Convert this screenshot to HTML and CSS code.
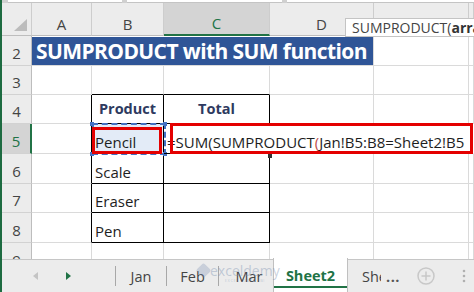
FILE: index.html
```html
<!DOCTYPE html>
<html lang="en">
<head>
<meta charset="utf-8">
<title>SUMPRODUCT with SUM function</title>
<link rel="stylesheet" href="styles.css">
</head>
<body>
<div class="app">
  <div class="edge"></div>
  <div class="main">
    <div class="fbar">
      <div class="fbox fb1"></div>
      <div class="fgap"></div>
      <div class="fbox fb2"></div>
      <div class="fgap"></div>
      <div class="fbox fb3"></div>
    </div>
    <div class="sheet">
      <!-- column headers -->
      <div class="c ch corner"><span class="tri"></span></div>
      <div class="c ch">A</div>
      <div class="c ch">B</div>
      <div class="c ch on">C</div>
      <div class="c ch">D</div>
      <div class="c ch">E</div>
      <div class="c ch"></div>
      <!-- row 2 -->
      <div class="c rh">2</div>
      <div class="c title">SUMPRODUCT with SUM function</div>
      <div class="c"></div>
      <div class="c"></div>
      <!-- row 3 -->
      <div class="c rh">3</div>
      <div class="c"></div>
      <div class="c bb"></div>
      <div class="c bb"></div>
      <div class="c"></div>
      <div class="c"></div>
      <div class="c"></div>
      <!-- row 4 -->
      <div class="c rh">4</div>
      <div class="c br"></div>
      <div class="c tb hd">Product</div>
      <div class="c tb hd">Total</div>
      <div class="c"></div>
      <div class="c"></div>
      <div class="c"></div>
      <!-- row 5 -->
      <div class="c rh on">5</div>
      <div class="c br"></div>
      <div class="c tb sel">Pencil</div>
      <div class="c tb open formula">=SUM(SUMPRODUCT<span class="paren">(</span>Jan!B5:B8=Sheet2!B5</div>
      <div class="c open"></div>
      <div class="c open"></div>
      <div class="c open"></div>
      <!-- row 6 -->
      <div class="c rh">6</div>
      <div class="c br"></div>
      <div class="c tb">Scale</div>
      <div class="c tb"></div>
      <div class="c"></div>
      <div class="c"></div>
      <div class="c"></div>
      <!-- row 7 -->
      <div class="c rh">7</div>
      <div class="c br"></div>
      <div class="c tb">Eraser</div>
      <div class="c tb"></div>
      <div class="c"></div>
      <div class="c"></div>
      <div class="c"></div>
      <!-- row 8 -->
      <div class="c rh">8</div>
      <div class="c br"></div>
      <div class="c tb">Pen</div>
      <div class="c tb"></div>
      <div class="c"></div>
      <div class="c"></div>
      <div class="c"></div>
      <!-- row 9 -->
      <div class="c rh">9</div>
      <div class="c"></div>
      <div class="c"></div>
      <div class="c"></div>
      <div class="c"></div>
      <div class="c"></div>
      <div class="c"></div>
    </div>
    <div class="tabs">
      <div class="nav">
        <svg class="arrow" width="6" height="8" viewBox="0 0 6 8"><path d="M5 0 L0 4 L5 8 Z" fill="#c4c4c4"/></svg>
        <svg class="arrow" width="6" height="8" viewBox="0 0 6 8"><path d="M0 0 L5 4 L0 8 Z" fill="#217346"/></svg>
      </div>
      <span class="sep"></span>
      <div class="tab t-jan">Jan</div>
      <span class="sep"></span>
      <div class="tab t-feb">Feb</div>
      <span class="sep"></span>
      <div class="tab t-mar">Mar</div>
      <div class="tab active">Sheet2</div>
      <div class="tab t-more"><span class="clip">Sheet3</span><span class="dots">...</span></div>
      <div class="plus">
        <svg width="18" height="18" viewBox="0 0 18 18"><circle cx="9" cy="9" r="8" fill="none" stroke="#c8c8c8" stroke-width="1.5"/><path d="M9 4.5 V13.5 M4.5 9 H13.5" stroke="#c8c8c8" stroke-width="1.5"/></svg>
      </div>
      <div class="vdots">
        <svg width="4" height="14" viewBox="0 0 4 14"><circle cx="2" cy="2" r="1.3" fill="#b0b0b0"/><circle cx="2" cy="7" r="1.3" fill="#b0b0b0"/><circle cx="2" cy="12" r="1.3" fill="#b0b0b0"/></svg>
      </div>
    </div>
  </div>

  <!-- overlays -->
  <div class="tip">SUMPRODUCT(<b>array</b></div>
  <div class="ants"></div>
  <span class="hdl h1"></span><span class="hdl h2"></span><span class="hdl h3"></span><span class="hdl h4"></span>
  <span class="fill-handle"></span>
  <div class="redbox rb1"></div>
  <div class="redbox rb2"></div>
  <div class="wm"><span class="wm-ico"></span>exceldemy<small>EXCEL · DATA · BI</small></div>
</div>
</body>
</html>
```
FILE: styles.css
```css
* { box-sizing: border-box; margin: 0; padding: 0; }
html, body { width: 474px; height: 292px; overflow: hidden; background: #fff; }
body { font-family: "Open Sans", "Noto Sans", sans-serif; }

.app { position: relative; display: flex; width: 474px; height: 292px; overflow: hidden; }
.edge { flex: none; width: 2px; background: #1e6b41; }
.main { flex: 1; min-width: 0; display: flex; flex-direction: column; }

/* formula bar remnant */
.fbar { flex: none; height: 3px; display: flex; background: #d0d0d0; padding-left: 6px; }
.fbox { background: #fff; border-bottom: 1px solid #c4c4c4; }
.fb1 { width: 114px; }
.fb2 { width: 155px; }
.fb3 { flex: 1; }
.fgap { width: 5px; }

/* grid */
.sheet {
  flex: none;
  height: 256px;
  display: grid;
  grid-template-columns: 30px 60px 72px 106px 104px 95px 1fr;
  grid-template-rows: 33px 30px 29px 29px 30px 30px 29px 30px 30px;
  overflow: hidden;
}
.c {
  display: flex;
  align-items: flex-end;
  padding: 0 0 1px 3px;
  border-right: 1px solid #dadada;
  border-bottom: 1px solid #dadada;
  font-size: 15px;
  line-height: 20px;
  color: #1e1e1e;
  white-space: nowrap;
  min-width: 0;
}
.ch {
  background: #ececec;
  border-right: 1px solid #cdcdcd;
  border-bottom: 1px solid #bdbdbd;
  justify-content: center;
  align-items: center;
  padding: 9px 0 0 0;
  color: #444;
  font-size: 15px;
}
.ch.on { background: #d4d4d4; color: #217346; border-bottom: 2px solid #217346; }
.corner { justify-content: flex-end; align-items: flex-end; padding: 0 4px 4px 0; }
.tri {
  width: 13px; height: 12px;
  background: #bcbcbc;
  clip-path: polygon(100% 0, 100% 100%, 0 100%);
}
.rh {
  background: #ececec;
  border-right: 1px solid #bdbdbd;
  border-bottom: 1px solid #d2d2d2;
  justify-content: center;
  padding: 0 0 2px 0;
  color: #444;
  font-size: 15px;
}
.rh.on { background: #d4d4d4; color: #217346; border-right: 2px solid #217346; }

.title {
  grid-column: span 4;
  background: #2f5597;
  color: #fff;
  font-weight: 700;
  font-size: 21px;
  letter-spacing: -0.6px;
  align-items: center;
  padding: 0 0 0 4px;
  border-top: 1px solid #fff;
}

.bb { border-bottom-color: #000; }
.br { border-right-color: #000; }
.tb { border-right-color: #000; border-bottom-color: #000; }
.hd {
  justify-content: center;
  align-items: center;
  padding: 0;
  font-weight: 700;
  color: #2e3a60;
  font-size: 14.5px;
}
.sel { background: #e3ebf7; }
.open { border-right-color: transparent; overflow: visible; }
.formula { position: relative; z-index: 1; padding-left: 3px; }
.paren { color: #c0504d; }

/* sheet tabs */
.tabs {
  flex: 1;
  display: flex;
  align-items: center;
  background: #ececec;
  border-top: 1px solid #c6c6c6;
  font-size: 14.5px;
  color: #444;
}
.nav { width: 113px; display: flex; align-items: center; gap: 27px; padding-left: 31px; height: 100%; }
.sep { width: 1px; height: 20px; background: #a8a8a8; flex: none; }
.tab { height: 100%; display: flex; align-items: center; justify-content: center; flex: none; }
.t-jan { width: 50px; }
.t-feb { width: 51px; }
.t-mar { width: 54px; padding-left: 6px; }
.active {
  width: 75px;
  margin-top: -2px;
  height: calc(100% + 2px);
  background: #fff;
  border-left: 1px solid #c0c0c0;
  border-right: 1px solid #c0c0c0;
  color: #217346;
  font-weight: 700;
  position: relative;
}
.active::after {
  content: "";
  position: absolute;
  left: 0; right: 0; bottom: 4px;
  height: 2px;
  background: #217346;
}
.t-more { width: 58px; justify-content: flex-start; padding-left: 14px; gap: 5px; }
.clip { display: inline-block; width: 19px; overflow: hidden; }
.dots { letter-spacing: 0.5px; font-weight: 700; color: #555; }
.plus { width: 40px; display: flex; justify-content: center; }
.vdots { flex: 1; display: flex; justify-content: center; padding-left: 8px; }

/* overlays */
.tip {
  position: absolute;
  left: 345px; top: 18px;
  width: 140px; height: 19px;
  background: #fff;
  border: 1px solid #c4c4c4;
  font-size: 14px;
  line-height: 17px;
  color: #444;
  padding-left: 6px;
  white-space: nowrap;
}
.tip b { font-weight: 700; color: #333; }
.ants {
  position: absolute;
  left: 92px; top: 123px;
  width: 74px; height: 32px;
  border: 2px dashed #4472c4;
}
.hdl { position: absolute; width: 4px; height: 4px; background: #4472c4; }
.h1 { left: 90px; top: 122px; }
.h2 { left: 163px; top: 122px; }
.h3 { left: 90px; top: 152px; }
.h4 { left: 163px; top: 152px; }
.fill-handle { position: absolute; left: 268px; top: 154px; width: 4px; height: 4px; background: #333; }
.redbox { position: absolute; border: 3px solid #e40000; }
.rb1 { left: 92px; top: 127px; width: 70px; height: 27px; }
.rb2 { left: 170px; top: 123px; width: 303px; height: 31px; z-index: 2; }

.wm {
  position: absolute;
  left: 200px; top: 264px;
  display: flex; flex-direction: column; align-items: center;
  font-size: 14px; line-height: 14px;
  color: rgba(120, 140, 175, 0.4);
  padding-left: 10px;
}
.wm small { font-size: 4px; line-height: 5px; letter-spacing: 0.5px; }
.wm-ico {
  position: absolute; left: -2px; top: 1px;
  width: 11px; height: 11px;
  border-radius: 2px;
  background: rgba(120, 140, 175, 0.3);
  transform: rotate(45deg);
}
```
